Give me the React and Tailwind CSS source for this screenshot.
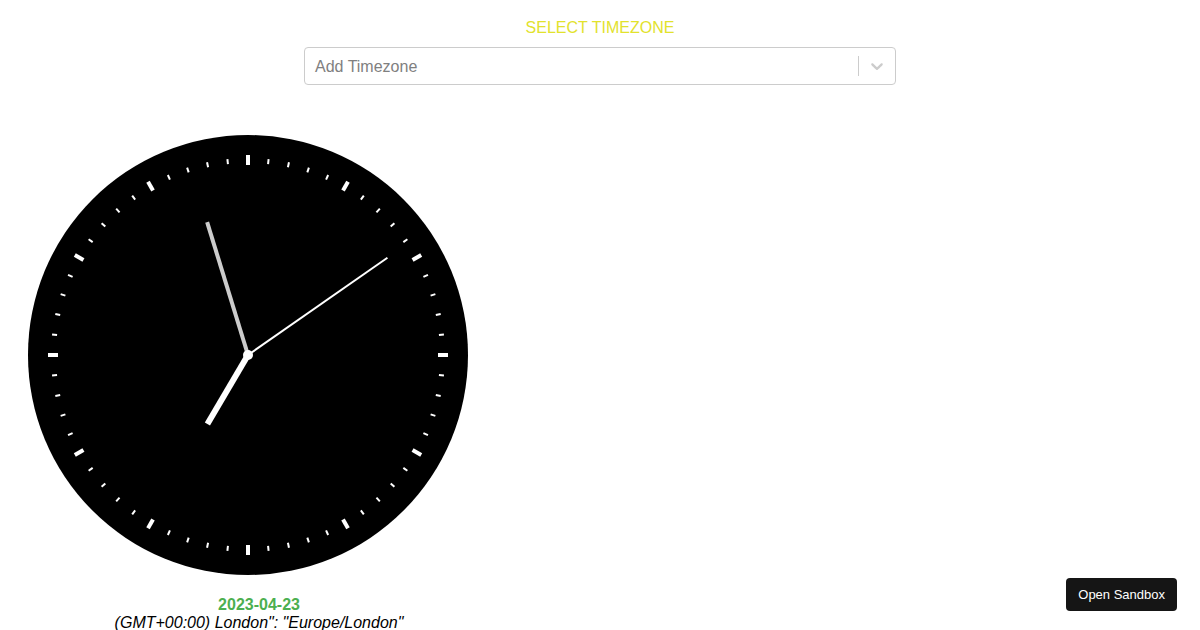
const ticks = Array.from({ length: 60 }, (_, i) => i)

function Hand({ angle, length, width, color }) {
  return (
    <line
      x1="220"
      y1="220"
      x2="220"
      y2={220 - length}
      stroke={color}
      strokeWidth={width}
      transform={`rotate(${angle} 220 220)`}
    />
  )
}

function Clock() {
  return (
    <svg width="440" height="440" viewBox="0 0 440 440" className="block">
      <circle cx="220" cy="220" r="220" fill="#000" />
      {ticks.map((i) => {
        const hour = i % 5 === 0
        return (
          <line
            key={i}
            x1="220"
            y1={hour ? 20 : 23}
            x2="220"
            y2={hour ? 30 : 28}
            stroke="#fff"
            strokeWidth={hour ? 4 : 2}
            transform={`rotate(${i * 6} 220 220)`}
          />
        )
      })}
      <Hand angle={210.5} length={80} width={6} color="#fff" />
      <Hand angle={342.9} length={139} width={4} color="#cccccc" />
      <Hand angle={55.1} length={170} width={2} color="#fff" />
      <circle cx="220" cy="220" r="5" fill="#fff" />
    </svg>
  )
}

export default function App() {
  return (
    <div
      className="min-h-[630px] bg-white"
      style={{ fontFamily: '"Liberation Sans", Arial, sans-serif' }}
    >
      <div className="pt-[18px] flex flex-col items-center">
        <h1 className="text-[16px] leading-[20px] text-[#e2e22c]">SELECT TIMEZONE</h1>

        <div className="mt-[9px] w-[592px] h-[38px] flex items-center border border-[#cccccc] rounded-[4px] bg-white">
          <div className="flex-1 pl-[10px] pt-[2px] text-[16px] text-[#808080]">Add Timezone</div>
          <span className="w-px h-[20px] bg-[#cccccc]" />
          <div className="w-[36px] flex items-center justify-center text-[#cccccc]">
            <svg viewBox="0 0 20 20" width="20" height="20" fill="currentColor">
              <path d="M4.516 7.548c0.436-0.446 1.043-0.481 1.576 0l3.908 3.747 3.908-3.747c0.533-0.481 1.141-0.446 1.574 0 0.436 0.445 0.408 1.197 0 1.615-0.406 0.418-4.695 4.502-4.695 4.502-0.217 0.223-0.502 0.335-0.787 0.335s-0.57-0.112-0.789-0.335c0 0-4.287-4.084-4.695-4.502s-0.436-1.17 0-1.615z" />
            </svg>
          </div>
        </div>
      </div>

      <div className="mt-[50px] ml-[28px] w-[462px] flex flex-col">
        <Clock />
        <div className="mt-[21px] text-center">
          <p className="text-[16px] leading-[18px] font-bold text-[#4caf50]">2023-04-23</p>
          <p className="text-[16px] leading-[18px] italic text-black">
            (GMT+00:00) London": "Europe/London"
          </p>
        </div>
      </div>

      <button className="fixed right-[23px] bottom-[19px] h-[33px] px-[12px] rounded-[4px] bg-[#151515] text-white text-[13px]">
        Open Sandbox
      </button>
    </div>
  )
}
